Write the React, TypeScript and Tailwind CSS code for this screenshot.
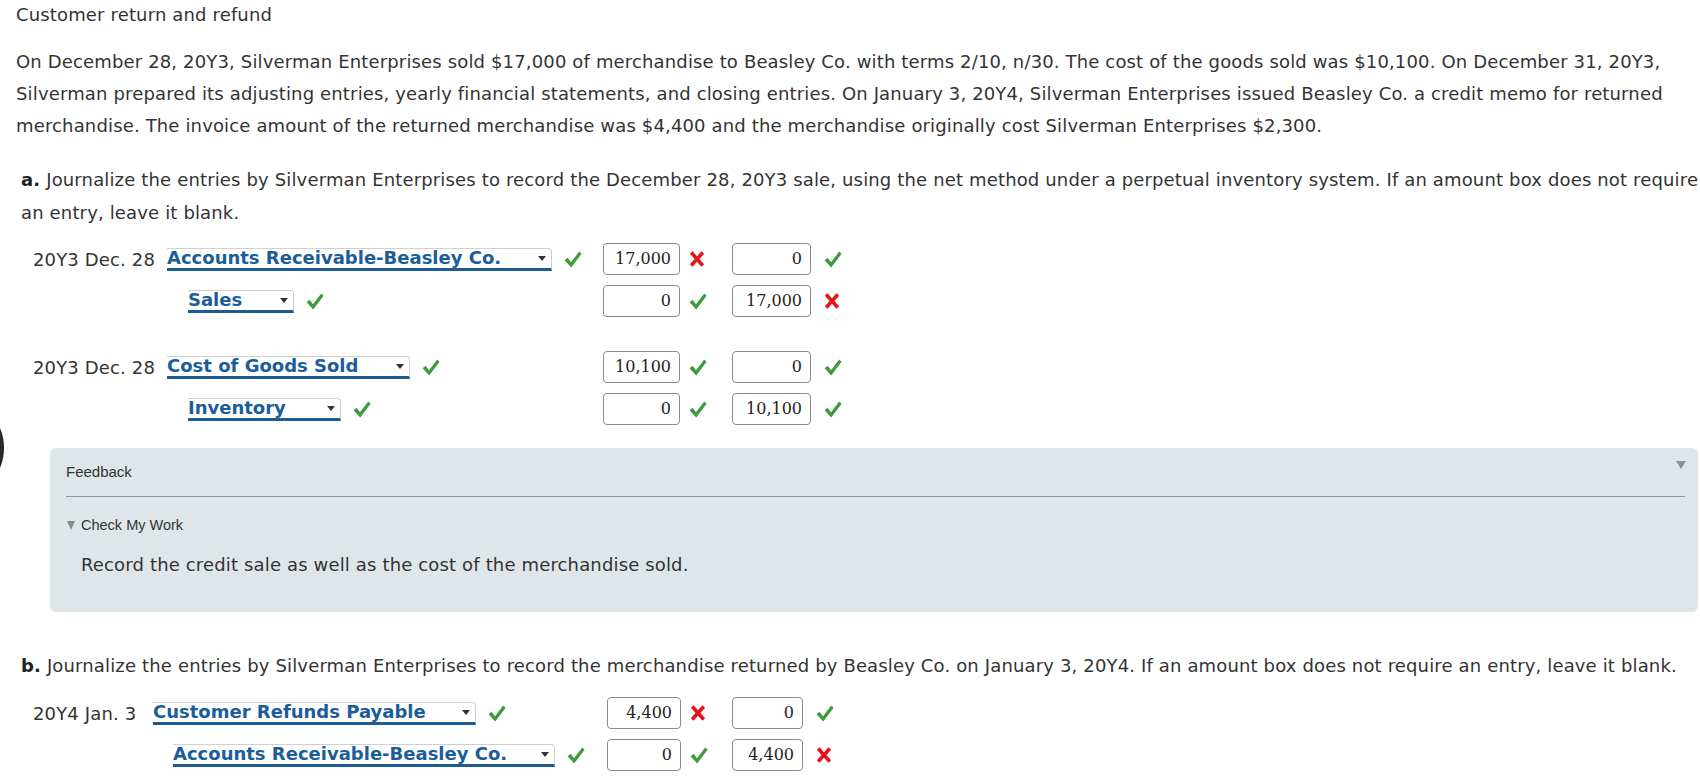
import React from 'react';

const Check = () => (
  <svg width="18" height="17" viewBox="0 0 18 17" className="shrink-0">
    <path d="M0.6 9.3 L3.6 6.8 L7 11.2 L15.2 0.6 L17.6 2.7 L7.2 16.4 Z" fill="#3d9b3d" />
  </svg>
);

const Cross = () => (
  <svg width="16" height="16" viewBox="0 0 16 16" className="shrink-0">
    <path d="M2.2 1.5 L13.8 14.5 M13.8 1.5 L2.2 14.5" stroke="#e8141c" strokeWidth="3.6" />
  </svg>
);

const Mark = ({ ok }: { ok: boolean }) => (ok ? <Check /> : <Cross />);

const AccountSelect = ({ label, width }: { label: string; width: string }) => (
  <div
    className={`${width} h-[23px] flex items-end justify-between bg-white border border-[#cfcfcf] border-l-0 border-b-[3px] border-b-[#1d5a8e] rounded-tr-[4px]`}
  >
    <span className="font-[family-name:DejaVu_Sans,sans-serif] font-bold text-[18px] leading-[20px] tracking-normal text-[#1b5d9a] whitespace-nowrap">
      {label}
    </span>
    <span className="mb-[7px] mr-[5px] w-0 h-0 border-l-[4px] border-r-[4px] border-t-[5px] border-l-transparent border-r-transparent border-t-[#333]" />
  </div>
);

const Amount = ({ value, width }: { value: string; width: string }) => (
  <div
    className={`${width} h-[32px] flex items-center justify-end pr-[8px] border border-[#8a8a8a] rounded-[4px] bg-white font-[family-name:DejaVu_Serif,serif] text-[16px] tracking-normal text-[#222]`}
  >
    {value}
  </div>
);

type Row = {
  date?: string;
  account: string;
  selectW: string;
  debit: string;
  debitOk: boolean;
  credit: string;
  creditOk: boolean;
};

const JournalRow = ({
  row,
  leftW,
  dateW,
  subPad,
  debitW,
  gapW,
  creditW,
}: {
  row: Row;
  leftW: string;
  dateW: string;
  subPad: string;
  debitW: string;
  gapW: string;
  creditW: string;
}) => (
  <div className="flex items-center h-[42px]">
    <div className={`${leftW} flex items-center`}>
      {row.date ? (
        <span className={`${dateW} whitespace-nowrap`}>{row.date}</span>
      ) : (
        <span className={subPad} />
      )}
      <AccountSelect label={row.account} width={row.selectW} />
      <span className="ml-[12px]">
        <Check />
      </span>
    </div>
    <Amount value={row.debit} width={debitW} />
    <div className={`${gapW} pl-[9px]`}>
      <Mark ok={row.debitOk} />
    </div>
    <Amount value={row.credit} width={creditW} />
    <div className="pl-[13px]">
      <Mark ok={row.creditOk} />
    </div>
  </div>
);

const partA1: Row[] = [
  { date: '20Y3 Dec. 28', account: 'Accounts Receivable-Beasley Co.', selectW: 'w-[385px]', debit: '17,000', debitOk: false, credit: '0', creditOk: true },
  { account: 'Sales', selectW: 'w-[106px]', debit: '0', debitOk: true, credit: '17,000', creditOk: false },
];
const partA2: Row[] = [
  { date: '20Y3 Dec. 28', account: 'Cost of Goods Sold', selectW: 'w-[243px]', debit: '10,100', debitOk: true, credit: '0', creditOk: true },
  { account: 'Inventory', selectW: 'w-[153px]', debit: '0', debitOk: true, credit: '10,100', creditOk: true },
];
const partB: Row[] = [
  { date: '20Y4 Jan. 3', account: 'Customer Refunds Payable', selectW: 'w-[323px]', debit: '4,400', debitOk: false, credit: '0', creditOk: true },
  { account: 'Accounts Receivable-Beasley Co.', selectW: 'w-[382px]', debit: '0', debitOk: true, credit: '4,400', creditOk: false },
];

export default function App() {
  return (
    <div className="relative w-[1700px] h-[780px] overflow-hidden bg-white pl-[16px] pt-[4px] font-[family-name:DejaVu_Sans,sans-serif] text-[18px] tracking-[0.15px] text-[#333]">
      {/* partial ring at left edge */}
      <div className="absolute left-[-96px] top-[398px] w-[100px] h-[100px] rounded-full border-[4px] border-[#2a2a2a]" />

      <div className="leading-[22px]">Customer return and refund</div>

      <p className="mt-[20px] leading-[32px] whitespace-nowrap">
        On December 28, 20Y3, Silverman Enterprises sold $17,000 of merchandise to Beasley Co. with terms 2/10, n/30. The cost of the goods sold was $10,100. On December 31, 20Y3,
        <br />
        Silverman prepared its adjusting entries, yearly financial statements, and closing entries. On January 3, 20Y4, Silverman Enterprises issued Beasley Co. a credit memo for returned
        <br />
        merchandise. The invoice amount of the returned merchandise was $4,400 and the merchandise originally cost Silverman Enterprises $2,300.
      </p>

      <p className="mt-[21px] ml-[5px] leading-[33px] whitespace-nowrap">
        <b className="text-[#222]">a.</b> Journalize the entries by Silverman Enterprises to record the December 28, 20Y3 sale, using the net method under a perpetual inventory system. If an amount box does not require
        <br />
        an entry, leave it blank.
      </p>

      <div className="ml-[17px] mt-[9px]">
        {partA1.map((r, i) => (
          <JournalRow key={i} row={r} leftW="w-[570px]" dateW="w-[134px]" subPad="w-[155px]" debitW="w-[77px]" gapW="w-[52px]" creditW="w-[79px]" />
        ))}
        <div className="h-[24px]" />
        {partA2.map((r, i) => (
          <JournalRow key={i} row={r} leftW="w-[570px]" dateW="w-[134px]" subPad="w-[155px]" debitW="w-[77px]" gapW="w-[52px]" creditW="w-[79px]" />
        ))}
      </div>

      <div className="relative ml-[34px] mr-[2px] mt-[18px] h-[164px] rounded-[6px] bg-[#dfe6e9] pl-[16px] pr-[13px] pt-[14px] tracking-normal font-[family-name:Liberation_Sans,Arial,sans-serif]">
        <div className="text-[15px] leading-[20px] text-[#333]">Feedback</div>
        <span className="absolute right-[12px] top-[13px] w-0 h-0 border-l-[5px] border-r-[5px] border-t-[8px] border-l-transparent border-r-transparent border-t-[#8c9296]" />
        <div className="mt-[14px] h-px bg-[#8f979b]" />
        <div className="mt-[18px] flex items-center text-[14.5px] leading-[20px] text-[#333]">
          <span className="mr-[6px] ml-[1px] w-0 h-0 border-l-[4px] border-r-[4px] border-t-[9px] border-l-transparent border-r-transparent border-t-[#8a8a8a]" />
          Check My Work
        </div>
        <div className="mt-[18px] ml-[15px] leading-[24px] font-[family-name:DejaVu_Sans,sans-serif] text-[18px] tracking-[0.15px] text-[#333]">
          Record the credit sale as well as the cost of the merchandise sold.
        </div>
      </div>

      <p className="mt-[38px] ml-[5px] leading-[32px] whitespace-nowrap">
        <b className="text-[#222]">b.</b> Journalize the entries by Silverman Enterprises to record the merchandise returned by Beasley Co. on January 3, 20Y4. If an amount box does not require an entry, leave it blank.
      </p>

      <div className="ml-[17px] mt-[10px]">
        {partB.map((r, i) => (
          <JournalRow key={i} row={r} leftW="w-[574px]" dateW="w-[120px]" subPad="w-[140px]" debitW="w-[74px]" gapW="w-[51px]" creditW="w-[71px]" />
        ))}
      </div>
    </div>
  );
}
